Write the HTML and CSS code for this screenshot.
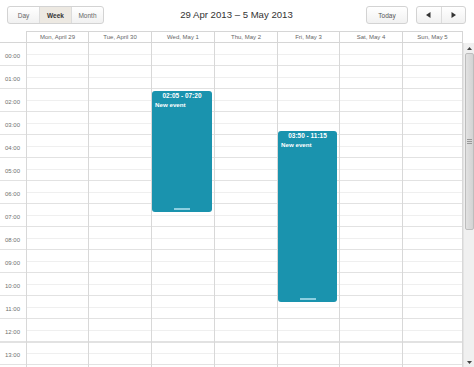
FILE: index.html
```html
<!DOCTYPE html>
<html>
<head>
<meta charset="utf-8">
<link rel="stylesheet" href="styles.css">
</head>
<body>
<div class="toolbar">
  <div class="views">
    <span class="view">Day</span>
    <span class="view active">Week</span>
    <span class="view">Month</span>
  </div>
  <div class="title">29 Apr 2013 – 5 May 2013</div>
  <div class="right">
    <span class="btn today">Today</span>
    <div class="nav">
      <span class="nav-btn"><svg width="5" height="6" viewBox="0 0 5 6"><polygon points="4.5,0 4.5,6 0,3" fill="#333"/></svg></span>
      <span class="nav-btn"><svg width="5" height="6" viewBox="0 0 5 6"><polygon points="0.5,0 0.5,6 5,3" fill="#333"/></svg></span>
    </div>
  </div>
</div>
<div class="head">
  <div class="head-gutter"></div>
  <div class="head-days">
    <div class="hcell">Mon, April 29</div>
    <div class="hcell">Tue, April 30</div>
    <div class="hcell">Wed, May 1</div>
    <div class="hcell">Thu, May 2</div>
    <div class="hcell">Fri, May 3</div>
    <div class="hcell">Sat, May 4</div>
    <div class="hcell">Sun, May 5</div>
  </div>
</div>
<div class="body">
  <div class="gutter">
    <div class="hour">00:00</div>
    <div class="hour">01:00</div>
    <div class="hour">02:00</div>
    <div class="hour">03:00</div>
    <div class="hour">04:00</div>
    <div class="hour">05:00</div>
    <div class="hour">06:00</div>
    <div class="hour">07:00</div>
    <div class="hour">08:00</div>
    <div class="hour">09:00</div>
    <div class="hour">10:00</div>
    <div class="hour">11:00</div>
    <div class="hour">12:00</div>
    <div class="hour">13:00</div>
  </div>
  <div class="days">
    <div class="day"></div>
    <div class="day"></div>
    <div class="day">
      <div class="event" style="top:48px;height:121px">
        <div class="ev-time">02:05 - 07:20</div>
        <div class="ev-text">New event</div>
        <div class="ev-handle"></div>
      </div>
    </div>
    <div class="day"></div>
    <div class="day">
      <div class="event" style="top:88px;height:171px">
        <div class="ev-time">03:50 - 11:15</div>
        <div class="ev-text">New event</div>
        <div class="ev-handle"></div>
      </div>
    </div>
    <div class="day"></div>
    <div class="day last"></div>
  </div>
  <div class="scroll">
    <div class="sb-btn"><svg width="5" height="3" viewBox="0 0 5 3"><polygon points="0,3 5,3 2.5,0" fill="#444"/></svg></div>
    <div class="sb-thumb"><span class="grip"></span></div>
    <div class="sb-track"></div>
    <div class="sb-btn"><svg width="5" height="3" viewBox="0 0 5 3"><polygon points="0,0 5,0 2.5,3" fill="#444"/></svg></div>
  </div>
</div>
</body>
</html>
```

FILE: styles.css
```css
* { box-sizing: border-box; }

body {
  margin: 0;
  width: 474px;
  height: 367px;
  overflow: hidden;
  background: #fff;
  font-family: "Liberation Sans", Arial, sans-serif;
}

.toolbar {
  display: grid;
  grid-template-columns: 1fr auto 1fr;
  align-items: start;
  height: 31px;
  padding: 6px 8px 0 7px;
}

.views {
  display: flex;
  width: 97px;
  height: 18px;
  border: 1px solid #d3d3d3;
  border-radius: 3px;
  overflow: hidden;
  background: linear-gradient(#ffffff, #f1f1f1);
}

.view {
  width: 32px;
  display: flex;
  align-items: center;
  justify-content: center;
  font-size: 6.5px;
  color: #666;
  border-left: 1px solid #dcdcdc;
}

.view:first-child {
  width: 31px;
  border-left: none;
}

.view.active {
  background: #ede9e2;
  color: #333;
  font-weight: bold;
}

.title {
  line-height: 18px;
  font-size: 9.6px;
  color: #333;
}

.right {
  display: flex;
  justify-content: flex-end;
  gap: 8px;
}

.btn {
  display: flex;
  align-items: center;
  justify-content: center;
  height: 18px;
  border: 1px solid #d3d3d3;
  border-radius: 3px;
  background: linear-gradient(#ffffff, #f1f1f1);
  font-size: 6.5px;
  color: #555;
}

.today { width: 42px; }

.nav {
  display: flex;
  width: 50px;
  height: 18px;
  border: 1px solid #d3d3d3;
  border-radius: 3px;
  background: linear-gradient(#ffffff, #f1f1f1);
}

.nav-btn {
  flex: 1;
  display: flex;
  align-items: center;
  justify-content: center;
}

.nav-btn + .nav-btn { border-left: 1px solid #dcdcdc; }

.head {
  display: flex;
  width: 463px;
  height: 12px;
  border-bottom: 1px solid #d6d6d6;
}

.head-gutter { width: 26px; flex: none; }

.head-days {
  display: grid;
  grid-template-columns: 62px 63px 63px 63px 62px 63px 61px;
  width: 437px;
  border-top: 1px solid #d6d6d6;
}

.hcell {
  border-left: 1px solid #d6d6d6;
  font-size: 6px;
  line-height: 10px;
  color: #666;
  text-align: center;
  white-space: nowrap;
}

.hcell:last-child { border-right: 1px solid #d6d6d6; }

.body {
  display: flex;
  height: 324px;
  overflow: hidden;
}

.gutter {
  width: 26px;
  flex: none;
  padding-top: 1px;
  background:
    linear-gradient(#e2e2e2, #e2e2e2) 0 298px / 100% 2px no-repeat,
    repeating-linear-gradient(to bottom, transparent 0 22px, #e2e2e2 22px 23px);
}

.hour {
  height: 23px;
  display: flex;
  align-items: center;
  justify-content: flex-end;
  padding: 0 6px 0 0;
  font-size: 6px;
  color: #707070;
}

.days {
  display: grid;
  grid-template-columns: 62px 63px 63px 63px 62px 63px 61px;
  width: 437px;
  flex: none;
  background:
    linear-gradient(#e2e2e2, #e2e2e2) 0 298px / 100% 2px no-repeat,
    repeating-linear-gradient(to bottom, transparent 0 11px, #efefef 11px 12px, transparent 12px 22px, #e2e2e2 22px 23px);
}

.day {
  position: relative;
  border-left: 1px solid #d8d8d8;
}

.day.last { border-right: 1px solid #d8d8d8; }

.event {
  position: absolute;
  left: 0;
  right: 2px;
  background: #1a93ae;
  border-radius: 3px;
  color: #fff;
}

.ev-time {
  padding-top: 1px;
  font-size: 6.5px;
  font-weight: bold;
  line-height: 8px;
  text-align: center;
}

.ev-text {
  margin-top: 1px;
  padding-left: 3px;
  font-size: 6.2px;
  font-weight: bold;
  line-height: 8px;
}

.ev-handle {
  position: absolute;
  left: 50%;
  bottom: 2px;
  width: 16px;
  height: 2px;
  margin-left: -8px;
  background: #8ccfe0;
}

.scroll {
  width: 11px;
  flex: none;
  display: flex;
  flex-direction: column;
  align-items: center;
  background: #f0f0f0;
  border-left: 1px solid #e4e4e4;
}

.sb-btn {
  height: 10px;
  width: 100%;
  display: flex;
  align-items: center;
  justify-content: center;
  flex: none;
}

.sb-thumb {
  width: 9px;
  height: 177px;
  flex: none;
  display: flex;
  align-items: center;
  justify-content: center;
  border: 1px solid #bdbdbd;
  border-radius: 2px;
  background: linear-gradient(to right, #e2e2e2, #d3d3d3);
}

.grip {
  width: 5px;
  height: 5px;
  background: repeating-linear-gradient(to bottom, #999 0 1px, transparent 1px 2px);
}

.sb-track { flex: 1; }
```
